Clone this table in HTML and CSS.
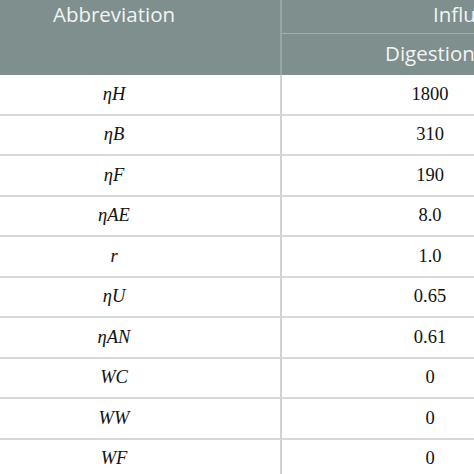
FILE: index.html
```html
<!DOCTYPE html>
<html>
<head>
<meta charset="utf-8">
<link rel="stylesheet" href="styles.css">
</head>
<body>
<div class="sheet">
  <div class="hcell h-abbr">Abbreviation</div>
  <div class="hcell h-infl">Influent</div>
  <div class="hcell h-sub h-dig">Digestion</div>
  <div class="hcell h-sub h-more">Other</div>

  <div class="cell c-abbr"><i>ηH</i></div><div class="cell c-val">1800</div><div class="cell c-more"></div>
  <div class="cell c-abbr"><i>ηB</i></div><div class="cell c-val">310</div><div class="cell c-more"></div>
  <div class="cell c-abbr"><i>ηF</i></div><div class="cell c-val">190</div><div class="cell c-more"></div>
  <div class="cell c-abbr"><i>ηAE</i></div><div class="cell c-val">8.0</div><div class="cell c-more"></div>
  <div class="cell c-abbr"><i>r</i></div><div class="cell c-val">1.0</div><div class="cell c-more"></div>
  <div class="cell c-abbr"><i>ηU</i></div><div class="cell c-val">0.65</div><div class="cell c-more"></div>
  <div class="cell c-abbr"><i>ηAN</i></div><div class="cell c-val">0.61</div><div class="cell c-more"></div>
  <div class="cell c-abbr"><i>WC</i></div><div class="cell c-val">0</div><div class="cell c-more"></div>
  <div class="cell c-abbr"><i>WW</i></div><div class="cell c-val">0</div><div class="cell c-more"></div>
  <div class="cell c-abbr"><i>WF</i></div><div class="cell c-val">0</div><div class="cell c-more"></div>
</div>
</body>
</html>
```
FILE: styles.css
```css
html, body {
  margin: 0;
  padding: 0;
  overflow: hidden;
  background: #ffffff;
}
.sheet {
  display: grid;
  grid-template-columns: 334px 300px 300px;
  grid-template-rows: 34px 41px;
  grid-auto-rows: 40.5px;
  margin-left: -52px;
  width: 934px;
}
.hcell {
  background: #7f8f8e;
  color: #f2f4f4;
  font-family: "Open Sans", "DejaVu Sans", sans-serif;
  font-size: 20.5px;
  text-align: center;
  box-sizing: border-box;
}
.h-abbr {
  grid-column: 1;
  grid-row: 1 / 3;
  line-height: 28px;
  border-right: 2px solid #98a6a5;
}
.h-infl {
  grid-column: 2 / 4;
  grid-row: 1;
  line-height: 28px;
  border-bottom: 1px solid #a2afae;
  padding-left: 151px;
  text-align: left;
}
.h-sub {
  grid-row: 2;
  line-height: 29px;
  padding-top: 5px;
}
.h-dig {
  grid-column: 2;
  border-right: 2px solid #98a6a5;
  padding-right: 2px;
}
.h-more {
  grid-column: 3;
}
.cell {
  font-family: "Liberation Serif", "Times New Roman", serif;
  font-size: 18.5px;
  color: #111111;
  display: flex;
  align-items: center;
  justify-content: center;
  box-sizing: border-box;
  border-bottom: 2px solid #d8d8d8;
}
.cell i {
  font-style: italic;
}
.c-abbr {
  border-right: 2px solid #d2d2d2;
}
.c-val {
  border-right: 2px solid #d2d2d2;
  padding-right: 2px;
}
```
